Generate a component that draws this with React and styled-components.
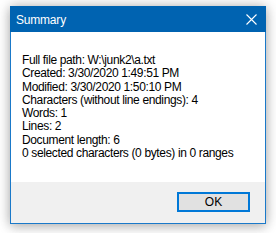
import React from 'react'
import styled, { createGlobalStyle } from 'styled-components'

const GlobalStyle = createGlobalStyle`
  html, body {
    margin: 0;
    padding: 0;
    background: #ffffff;
  }
  body {
    font-family: "Liberation Sans", Arial, sans-serif;
  }
`

const Page = styled.div`
  padding: 6px 0 0 10px;
  width: 276px;
  height: 233px;
  box-sizing: border-box;
  overflow: hidden;
`

const Window = styled.div`
  width: 256px;
  height: 218px;
  box-sizing: border-box;
  border: 1px solid #1a79c9;
  border-top: none;
  display: flex;
  flex-direction: column;
  background: #ffffff;
  box-shadow: 0 0 12px rgba(0, 0, 0, 0.28), 0 4px 10px rgba(0, 0, 0, 0.12);
`

const TitleBar = styled.div`
  height: 26px;
  margin: 0 -1px;
  background: #0063b1;
  display: flex;
  align-items: center;
  justify-content: space-between;
  padding: 0 9px 0 6px;
  color: #ffffff;
  font-size: 12px;
  letter-spacing: -0.2px;
`

const Title = styled.span`
  padding-top: 1px;
`

const CloseIcon = styled.svg`
  width: 11px;
  height: 11px;
  display: block;
`

const Content = styled.div`
  height: 150px;
  box-sizing: border-box;
  padding: 22px 0 0 11px;
  color: #000000;
  font-size: 12px;
  line-height: 13.3px;
  letter-spacing: -0.36px;
`

const Line = styled.div`
  white-space: nowrap;
`

const Footer = styled.div`
  flex: 1;
  background: #f0f0f0;
  display: flex;
  justify-content: flex-end;
  align-items: flex-start;
  padding: 10px 15px 0 0;
`

const Button = styled.button`
  width: 73px;
  height: 20px;
  box-sizing: border-box;
  border: 2px solid #0078d7;
  background: #e1e1e1;
  color: #000000;
  font-family: "Liberation Sans", Arial, sans-serif;
  font-size: 12px;
  padding: 0;
  margin: 0;
`

const lines = [
  'Full file path: W:\\junk2\\a.txt',
  'Created: 3/30/2020 1:49:51 PM',
  'Modified: 3/30/2020 1:50:10 PM',
  'Characters (without line endings): 4',
  'Words: 1',
  'Lines: 2',
  'Document length: 6',
  '0 selected characters (0 bytes) in 0 ranges',
]

export default function App() {
  return (
    <>
      <GlobalStyle />
      <Page>
        <Window>
          <TitleBar>
            <Title>Summary</Title>
            <CloseIcon viewBox="0 0 11 11">
              <path d="M0.5 0.5 L10.5 10.5 M10.5 0.5 L0.5 10.5" stroke="#ffffff" strokeWidth="1.1" fill="none" />
            </CloseIcon>
          </TitleBar>
          <Content>
            {lines.map((l) => (
              <Line key={l}>{l}</Line>
            ))}
          </Content>
          <Footer>
            <Button>OK</Button>
          </Footer>
        </Window>
      </Page>
    </>
  )
}
